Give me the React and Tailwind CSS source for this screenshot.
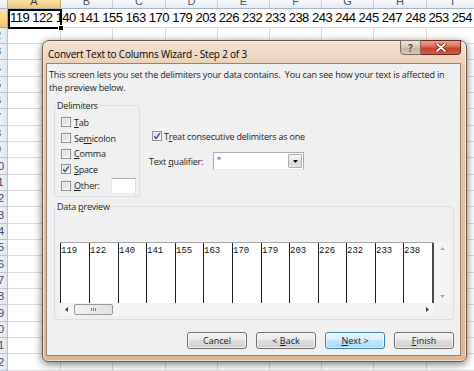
import React from 'react';

const colDefs = [
  { l: 'A', w: 'w-[53px]', sel: true },
  { l: 'B', w: 'w-[52px]' },
  { l: 'C', w: 'w-[53px]' },
  { l: 'D', w: 'w-[52px]' },
  { l: 'E', w: 'w-[52px]' },
  { l: 'F', w: 'w-[52px]' },
  { l: 'G', w: 'w-[52px]' },
  { l: 'H', w: 'w-[53px]' },
  { l: 'I', w: 'w-[52px]' },
];

const rowHeights = [];
for (let i = 0; i < 21; i++) rowHeights.push(i % 3 === 2 ? 'h-[17px]' : 'h-[16px]');

function HeaderRow() {
  return (
    <div className="flex h-[9px] border-b border-[#a7b4c4]">
      <div className="w-[8px] shrink-0 border-r border-[#a7b4c4] bg-[linear-gradient(#f6f8fa,#e3e8ee)]" />
      {colDefs.map((c) => (
        <div
          key={c.l}
          className={
            c.sel
              ? `${c.w} shrink-0 overflow-hidden border-r border-[#c2a25c] bg-[linear-gradient(#f9e3ad,#f2c866)] flex items-end justify-center pb-[1px] text-[11px] leading-[11px] text-[#3b3b3b]`
              : `${c.w} shrink-0 overflow-hidden border-r border-[#c7cfda] bg-[linear-gradient(#f8f9fb,#e6eaf0)] flex items-end justify-center pb-[1px] text-[11px] leading-[11px] text-[#4a5566]`
          }
        >
          {c.l}
        </div>
      ))}
    </div>
  );
}

function Row1() {
  return (
    <div className="relative flex h-[19px]">
      <div className="w-[8px] shrink-0 border-r border-b border-[#c2a25c] bg-[linear-gradient(#f9e3ad,#f2c866)]" />
      <div className="flex-1 flex items-center pl-[2px] border-b border-[#dadcdd] overflow-hidden whitespace-nowrap text-[13px] tracking-[-0.5px] text-black">
        119 122 140 141 155 163 170 179 203 226 232 233 238 243 244 245 247 248 253 254 255 256
      </div>
      <div className="absolute left-[8px] top-0 w-[54px] h-[20px] border-2 border-black" />
      <div className="absolute left-[58px] top-[16px] w-[6px] h-[6px] bg-black border border-white" />
    </div>
  );
}

function GridRow({ h, n }) {
  return (
    <div className={`flex ${h}`}>
      <div className="w-[8px] shrink-0 overflow-hidden border-r border-b border-[#b9c3cf] bg-[linear-gradient(90deg,#eef1f5,#e2e7ed)] flex items-center">
        <div className="w-[20px] -ml-[12px] shrink-0 text-center text-[11px] leading-none text-[#3d4654]">{n}</div>
      </div>
      {colDefs.map((c) => (
        <div key={c.l} className={`${c.w} shrink-0 border-r border-b border-[#dadcdd]`} />
      ))}
    </div>
  );
}

function Check({ checked }) {
  return (
    <span className="w-[10px] h-[10px] shrink-0 border border-[#8e8f8f] bg-[linear-gradient(135deg,#d4d6da,#f7f7f7)] shadow-[inset_0_0_0_1px_rgba(255,255,255,0.6)] flex items-center justify-center">
      {checked && (
        <svg width="8" height="8" viewBox="0 0 8 8">
          <path d="M1.2 4.3 L3.1 6.6 L6.9 1.2" fill="none" stroke="#38518a" strokeWidth="1.4" />
        </svg>
      )}
    </span>
  );
}

function Btn({ children, primary }) {
  return (
    <div
      className={
        primary
          ? 'w-[60px] h-[17px] rounded-[3px] border border-[#3c7fb1] bg-[linear-gradient(#eaf6fd_0%,#d9f0fc_45%,#bee6fd_50%,#a7d9f5_100%)] shadow-[inset_0_0_0_1px_rgba(255,255,255,0.6)] flex items-center justify-center text-[9px] leading-none text-[#1b1b1b] whitespace-pre'
          : 'w-[60px] h-[17px] rounded-[3px] border border-[#707070] bg-[linear-gradient(#f2f2f2_0%,#ebebeb_45%,#dddddd_50%,#cfcfcf_100%)] shadow-[inset_0_0_0_1px_rgba(255,255,255,0.7)] flex items-center justify-center text-[9px] leading-none text-[#1b1b1b] whitespace-pre'
      }
    >
      {children}
    </div>
  );
}

const prevCols = [
  ['119', 'w-[29px]'],
  ['122', 'w-[29px]'],
  ['140', 'w-[28px]'],
  ['141', 'w-[29px]'],
  ['155', 'w-[28px]'],
  ['163', 'w-[29px]'],
  ['170', 'w-[29px]'],
  ['179', 'w-[28px]'],
  ['203', 'w-[29px]'],
  ['226', 'w-[28px]'],
  ['232', 'w-[29px]'],
  ['233', 'w-[28px]'],
];

function Preview() {
  return (
    <div className="flex flex-col w-[390px]">
      <div className="flex h-[61px]">
        <div className="flex w-[374px] h-full bg-white border-t border-[#a5a5a5]">
          {prevCols.map(([t, w]) => (
            <div key={t} className={`${w} h-full shrink-0 border-l border-[#1e1e1e] pt-[3px] font-['Liberation_Mono',monospace] text-[9px] leading-[11px] text-[#111]`}>
              {t}
            </div>
          ))}
          <div className="w-[31px] h-full shrink-0 border-l border-r-2 border-l-[#1e1e1e] border-r-[#4a4a4a] pt-[3px] font-['Liberation_Mono',monospace] text-[9px] leading-[11px] text-[#111]">
            238
          </div>
        </div>
        <div className="w-[16px] h-full bg-[#f4f4f4] flex flex-col items-center justify-between py-[5px]">
          <svg width="5" height="3" viewBox="0 0 5 3"><path d="M0 3 L2.5 0 L5 3 Z" fill="#a9a9a9" /></svg>
          <svg width="5" height="3" viewBox="0 0 5 3"><path d="M0 0 L5 0 L2.5 3 Z" fill="#a9a9a9" /></svg>
        </div>
      </div>
      <div className="flex h-[13px]">
        <div className="w-[374px] h-full bg-[#f4f4f4] flex items-center pl-[5px] pr-[5px]">
          <svg width="3" height="5" viewBox="0 0 3 5"><path d="M3 0 L0 2.5 L3 5 Z" fill="#3c3c3c" /></svg>
          <div className="ml-[6px] w-[39px] h-[11px] rounded-[2px] border border-[#979797] bg-[linear-gradient(90deg,#f3f3f3,#e2e2e2)] flex items-center justify-center gap-[1px]">
            <span className="w-[1px] h-[3px] bg-[#7d7d7d]" />
            <span className="w-[1px] h-[3px] bg-[#7d7d7d]" />
            <span className="w-[1px] h-[3px] bg-[#7d7d7d]" />
          </div>
          <svg className="ml-auto" width="3" height="5" viewBox="0 0 3 5"><path d="M0 0 L3 2.5 L0 5 Z" fill="#3c3c3c" /></svg>
        </div>
        <div className="w-[16px] h-full bg-[#f0f0f0]" />
      </div>
    </div>
  );
}

function Dialog() {
  const delims = [
    { k: 'tab', label: <><u>T</u>ab</>, h: 'h-[16px]' },
    { k: 'semi', label: <>Se<u>m</u>icolon</>, h: 'h-[16px]' },
    { k: 'comma', label: <><u>C</u>omma</>, h: 'h-[15px]' },
    { k: 'space', label: <><u>S</u>pace</>, h: 'h-[16px]', checked: true },
  ];
  return (
    <div className="absolute left-[42px] top-[40px] w-[425px] h-[322px] flex flex-col rounded-t-[7px] rounded-b-[6px] border border-[#6e5a4b] bg-[linear-gradient(#f3e2d2,#e8cbb0_10%,#ddb898_100%)] shadow-[inset_0_0_0_1px_rgba(255,255,255,0.55),0_2px_9px_rgba(0,0,0,0.55)] font-['Open_Sans',sans-serif] text-[#1b1b1b]">
      <div className="flex h-[22px] shrink-0">
        <div className="self-center mt-[3px] pl-[5px] text-[10px] tracking-[-0.2px] leading-none text-black">
          Convert Text to Columns Wizard - Step 2 of 3
        </div>
        <div className="ml-auto mr-[5px] -mt-[1px] flex h-[15px]">
          <div className="w-[21px] h-full rounded-bl-[4px] border border-[#7d6a5b] bg-[linear-gradient(#efe3da,#d8c6b8_50%,#c9b3a2_51%,#d8c6b8)] flex items-center justify-center text-[10px] leading-none text-[#5a4a40] font-bold">
            ?
          </div>
          <div className="w-[40px] h-full rounded-br-[4px] border border-l-0 border-[#6b2a1e] bg-[linear-gradient(#eaa592,#d8664e_48%,#c4402a_52%,#d35a3e)] flex items-center justify-center">
            <svg width="12" height="9" viewBox="0 0 12 9">
              <path d="M2 1 L10 8 M10 1 L2 8" stroke="#5a1d12" strokeWidth="3.2" strokeLinecap="round" />
              <path d="M2 1 L10 8 M10 1 L2 8" stroke="#ffffff" strokeWidth="1.8" strokeLinecap="round" />
            </svg>
          </div>
        </div>
      </div>
      <div className="flex-1 ml-[3px] mr-[5px] mb-[5px] border border-[#98826f] bg-[#f0f0f0] flex flex-col">
        <p className="pt-[4px] pl-[2px] text-[9px] leading-[13px] tracking-[-0.15px] whitespace-nowrap">
          This screen lets you set the delimiters your data contains.&nbsp; You can see how your text is affected in
          <br />
          the preview below.
        </p>
        <div className="flex items-start mt-[5px]">
          <fieldset className="ml-[7px] w-[86px] border border-[#d5dfe5] rounded-[3px]">
            <legend className="ml-[1px] px-[1px] text-[9px] leading-[13px] tracking-[-0.2px]">Delimiters</legend>
            <div className="flex flex-col pl-[6px] pr-[3px] pt-[2px] pb-[2px] text-[9px] tracking-[-0.2px]">
              {delims.map((d) => (
                <div key={d.k} className={`flex items-center ${d.h}`}>
                  <Check checked={d.checked} />
                  <span className="ml-[3px] leading-none">{d.label}</span>
                </div>
              ))}
              <div className="flex items-center h-[17px]">
                <Check />
                <span className="ml-[3px] leading-none"><u>O</u>ther:</span>
                <div className="ml-auto w-[25px] h-[16px] bg-white border border-[#abadb3] border-l-[#e2e3ea] border-b-[#e3e9ef] border-r-[#dbdfe6]" />
              </div>
            </div>
          </fieldset>
          <div className="ml-[9px] pt-[30px] flex flex-col text-[9px] tracking-[-0.2px]">
            <div className="flex items-center h-[14px] pl-[3px]">
              <Check checked />
              <span className="ml-[2px] leading-none">T<u>r</u>eat consecutive delimiters as one</span>
            </div>
            <div className="flex items-center h-[18px] mt-[9px]">
              <span className="w-[64px] leading-none">Text <u>q</u>ualifier:</span>
              <div className="w-[91px] h-full bg-white border border-[#abadb3] border-b-[#e3e9ef] flex items-center">
                <span className="pl-[3px] leading-none text-[10px]">"</span>
                <div className="ml-auto mr-[1px] w-[14px] h-[14px] border border-[#b0b0b0] rounded-[1px] bg-[linear-gradient(#f6f6f6,#e8e8e8_50%,#d9d9d9_51%,#e4e4e4)] flex items-center justify-center">
                  <svg width="5" height="3" viewBox="0 0 5 3"><path d="M0 0 L5 0 L2.5 3 Z" fill="#111" /></svg>
                </div>
              </div>
            </div>
          </div>
        </div>
        <fieldset className="mt-[3px] ml-[7px] w-[400px] border border-[#d5dfe5] rounded-[3px]">
          <legend className="ml-[1px] px-[1px] text-[9px] leading-[13px] tracking-[-0.2px]">Data <u>p</u>review</legend>
          <div className="pl-[5px] pt-[29px] pb-[3px]">
            <Preview />
          </div>
        </fieldset>
        <div className="flex justify-end gap-[9px] pr-[6px] mt-[12px] text-[9px]">
          <Btn>Cancel</Btn>
          <Btn>{'< '}<u>B</u>ack</Btn>
          <Btn primary><u>N</u>ext{' >'}</Btn>
          <Btn><u>F</u>inish</Btn>
        </div>
      </div>
    </div>
  );
}

export default function App() {
  return (
    <div className="relative w-[474px] h-[371px] overflow-hidden bg-white font-['Liberation_Sans',sans-serif]">
      <HeaderRow />
      <Row1 />
      {rowHeights.map((h, i) => (
        <GridRow key={i} h={h} n={i + 2} />
      ))}
      <Dialog />
    </div>
  );
}
